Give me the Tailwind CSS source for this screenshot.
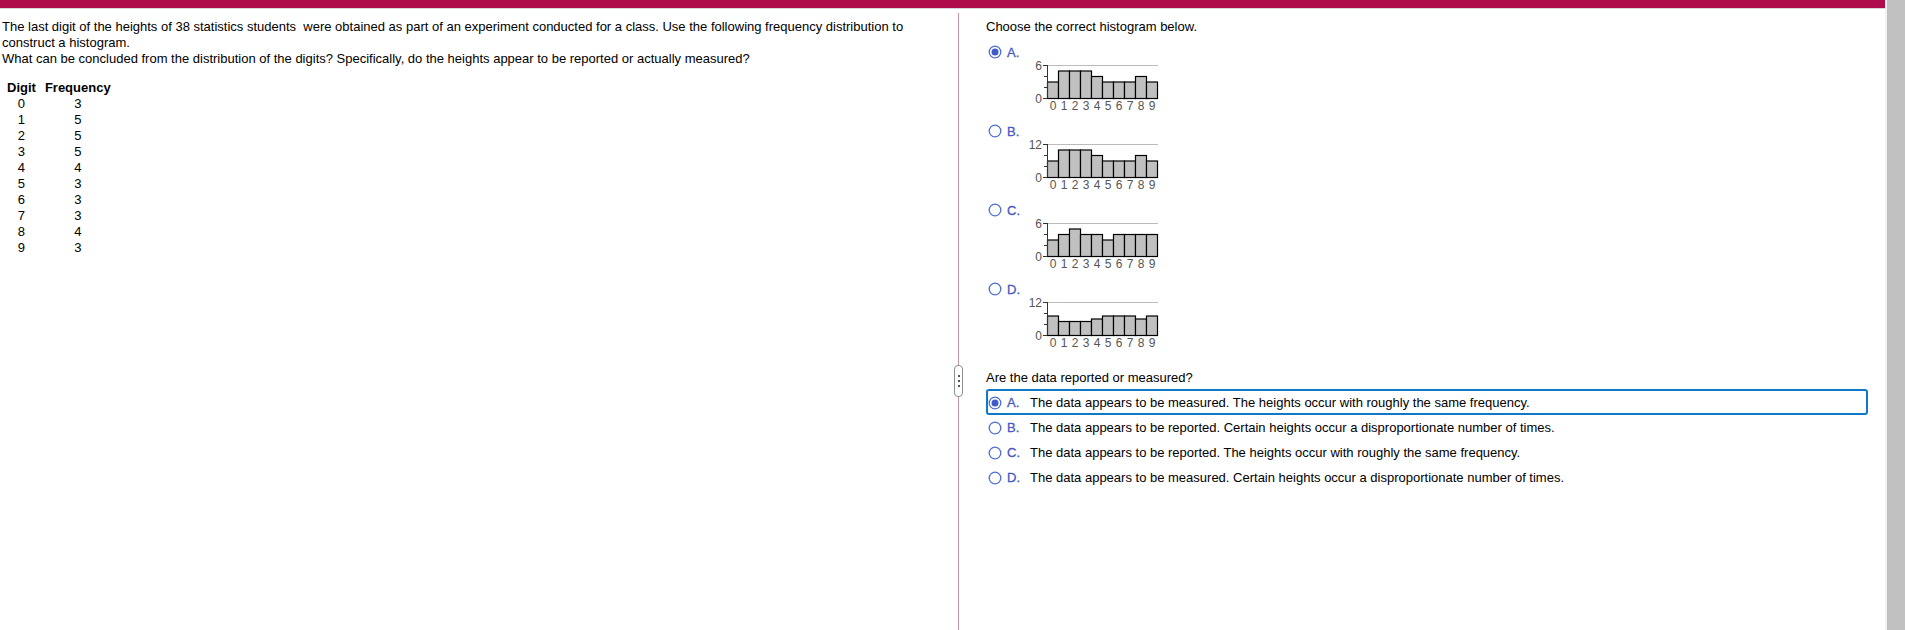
<!DOCTYPE html>
<html lang="en">
<head>
    <meta charset="UTF-8">
    <title>Statistics Question</title>
    <script src="https://cdn.jsdelivr.net/npm/@tailwindcss/browser@4"></script>
</head>
<body class="bg-white h-[630px] overflow-hidden flex font-['Liberation_Sans',Arial,sans-serif] text-[13px] leading-[16px] text-black">

<!-- Page -->
<div class="w-[1885px] flex flex-col">
    <div class="h-[8px] bg-[#af0c4c] shrink-0"></div>
    <div class="h-px bg-[#cfd6dc] shrink-0"></div>

    <div class="relative flex flex-1">
        <!-- Question -->
        <div class="w-[958px] shrink-0 pl-[2px] pt-[10px]">
            <p class="w-[930px]">The last digit of the heights of 38 statistics students&nbsp; were obtained as part of an experiment conducted for a class. Use the following frequency distribution to construct a histogram.</p>
            <p>What can be concluded from the distribution of the digits? Specifically, do the heights appear to be reported or actually measured?</p>

            <table class="mt-[13px] ml-[5px] border-collapse">
                <thead>
                    <tr class="font-bold h-[16px]"><th class="font-bold pr-[9px] text-center">Digit</th><th class="font-bold text-center">Frequency</th></tr>
                </thead>
                <tbody class="text-center">
                    <tr class="h-[16px]"><td class="pr-[9px]">0</td><td>3</td></tr>
                    <tr class="h-[16px]"><td class="pr-[9px]">1</td><td>5</td></tr>
                    <tr class="h-[16px]"><td class="pr-[9px]">2</td><td>5</td></tr>
                    <tr class="h-[16px]"><td class="pr-[9px]">3</td><td>5</td></tr>
                    <tr class="h-[16px]"><td class="pr-[9px]">4</td><td>4</td></tr>
                    <tr class="h-[16px]"><td class="pr-[9px]">5</td><td>3</td></tr>
                    <tr class="h-[16px]"><td class="pr-[9px]">6</td><td>3</td></tr>
                    <tr class="h-[16px]"><td class="pr-[9px]">7</td><td>3</td></tr>
                    <tr class="h-[16px]"><td class="pr-[9px]">8</td><td>4</td></tr>
                    <tr class="h-[16px]"><td class="pr-[9px]">9</td><td>3</td></tr>
                </tbody>
            </table>
        </div>

        <!-- Divider -->
        <div class="w-px mt-[4px] bg-[#c093a6] shrink-0"></div>

        <!-- Drag handle -->
        <div class="absolute left-[954px] top-[356px] w-[9px] h-[32px] rounded-[4px] border border-[#8a8f94] bg-white flex flex-col items-center justify-center gap-[3px]">
            <span class="w-[2px] h-[2px] bg-[#555]"></span>
            <span class="w-[2px] h-[2px] bg-[#555]"></span>
            <span class="w-[2px] h-[2px] bg-[#555]"></span>
        </div>

        <!-- Answers -->
        <div class="flex-1 pl-[27px] pt-[10px]">
            <p>Choose the correct histogram below.</p>

            <div class="mt-[10px]">
                <!-- A -->
                <div class="h-[79px] flex items-start">
                    <svg class="ml-[2px] shrink-0" width="14" height="14" viewBox="0 0 14 14"><circle cx="7" cy="7" r="5.8" fill="#fff" stroke="#4f6fd6" stroke-width="1.3"/><circle cx="7" cy="7" r="3.5" fill="#3f5bc9"/></svg>
                    <span class="ml-[5px] w-[18px] text-[#4658c2] [-webkit-text-stroke:0.3px_#4658c2]">A.</span>
                    <svg class="mt-[14px]" width="140" height="54" viewBox="0 0 140 54">
                        <line x1="22" y1="6.5" x2="133" y2="6.5" stroke="#bbb"/>
                        <g fill="#c0c0c0" stroke="#000" stroke-width="1.2">
                            <rect x="22.5" y="23" width="11" height="16.5"/><rect x="33.5" y="12" width="11" height="27.5"/><rect x="44.5" y="12" width="11" height="27.5"/><rect x="55.5" y="12" width="11" height="27.5"/><rect x="66.5" y="17.5" width="11" height="22"/>
                            <rect x="77.5" y="23" width="11" height="16.5"/><rect x="88.5" y="23" width="11" height="16.5"/><rect x="99.5" y="23" width="11" height="16.5"/><rect x="110.5" y="17.5" width="11" height="22"/><rect x="121.5" y="23" width="11" height="16.5"/>
                        </g>
                        <path d="M22.5 6V39.5M18 6.5H22M19 17.5H22M19 28.5H22M18 39.5H22" stroke="#333" fill="none"/>
                        <g font-size="12" fill="#555" text-anchor="end"><text x="17" y="11">6</text><text x="17" y="44">0</text></g>
                        <g font-size="12" fill="#555" text-anchor="middle"><text x="28" y="51">0</text><text x="39" y="51">1</text><text x="50" y="51">2</text><text x="61" y="51">3</text><text x="72" y="51">4</text><text x="83" y="51">5</text><text x="94" y="51">6</text><text x="105" y="51">7</text><text x="116" y="51">8</text><text x="127" y="51">9</text></g>
                    </svg>
                </div>
                <!-- B -->
                <div class="h-[79px] flex items-start">
                    <svg class="ml-[2px] shrink-0" width="14" height="14" viewBox="0 0 14 14"><circle cx="7" cy="7" r="5.8" fill="#fff" stroke="#4f6fd6" stroke-width="1.3"/></svg>
                    <span class="ml-[5px] w-[18px] text-[#4658c2] [-webkit-text-stroke:0.3px_#4658c2]">B.</span>
                    <svg class="mt-[14px]" width="140" height="54" viewBox="0 0 140 54">
                        <line x1="22" y1="6.5" x2="133" y2="6.5" stroke="#bbb"/>
                        <g fill="#c0c0c0" stroke="#000" stroke-width="1.2">
                            <rect x="22.5" y="23" width="11" height="16.5"/><rect x="33.5" y="12" width="11" height="27.5"/><rect x="44.5" y="12" width="11" height="27.5"/><rect x="55.5" y="12" width="11" height="27.5"/><rect x="66.5" y="17.5" width="11" height="22"/>
                            <rect x="77.5" y="23" width="11" height="16.5"/><rect x="88.5" y="23" width="11" height="16.5"/><rect x="99.5" y="23" width="11" height="16.5"/><rect x="110.5" y="17.5" width="11" height="22"/><rect x="121.5" y="23" width="11" height="16.5"/>
                        </g>
                        <path d="M22.5 6V39.5M18 6.5H22M19 17.5H22M19 28.5H22M18 39.5H22" stroke="#333" fill="none"/>
                        <g font-size="12" fill="#555" text-anchor="end"><text x="17" y="11">12</text><text x="17" y="44">0</text></g>
                        <g font-size="12" fill="#555" text-anchor="middle"><text x="28" y="51">0</text><text x="39" y="51">1</text><text x="50" y="51">2</text><text x="61" y="51">3</text><text x="72" y="51">4</text><text x="83" y="51">5</text><text x="94" y="51">6</text><text x="105" y="51">7</text><text x="116" y="51">8</text><text x="127" y="51">9</text></g>
                    </svg>
                </div>
                <!-- C -->
                <div class="h-[79px] flex items-start">
                    <svg class="ml-[2px] shrink-0" width="14" height="14" viewBox="0 0 14 14"><circle cx="7" cy="7" r="5.8" fill="#fff" stroke="#4f6fd6" stroke-width="1.3"/></svg>
                    <span class="ml-[5px] w-[18px] text-[#4658c2] [-webkit-text-stroke:0.3px_#4658c2]">C.</span>
                    <svg class="mt-[14px]" width="140" height="54" viewBox="0 0 140 54">
                        <line x1="22" y1="6.5" x2="133" y2="6.5" stroke="#bbb"/>
                        <g fill="#c0c0c0" stroke="#000" stroke-width="1.2">
                            <rect x="22.5" y="23" width="11" height="16.5"/><rect x="33.5" y="17.5" width="11" height="22"/><rect x="44.5" y="12" width="11" height="27.5"/><rect x="55.5" y="17.5" width="11" height="22"/><rect x="66.5" y="17.5" width="11" height="22"/>
                            <rect x="77.5" y="23" width="11" height="16.5"/><rect x="88.5" y="17.5" width="11" height="22"/><rect x="99.5" y="17.5" width="11" height="22"/><rect x="110.5" y="17.5" width="11" height="22"/><rect x="121.5" y="17.5" width="11" height="22"/>
                        </g>
                        <path d="M22.5 6V39.5M18 6.5H22M19 17.5H22M19 28.5H22M18 39.5H22" stroke="#333" fill="none"/>
                        <g font-size="12" fill="#555" text-anchor="end"><text x="17" y="11">6</text><text x="17" y="44">0</text></g>
                        <g font-size="12" fill="#555" text-anchor="middle"><text x="28" y="51">0</text><text x="39" y="51">1</text><text x="50" y="51">2</text><text x="61" y="51">3</text><text x="72" y="51">4</text><text x="83" y="51">5</text><text x="94" y="51">6</text><text x="105" y="51">7</text><text x="116" y="51">8</text><text x="127" y="51">9</text></g>
                    </svg>
                </div>
                <!-- D -->
                <div class="h-[79px] flex items-start">
                    <svg class="ml-[2px] shrink-0" width="14" height="14" viewBox="0 0 14 14"><circle cx="7" cy="7" r="5.8" fill="#fff" stroke="#4f6fd6" stroke-width="1.3"/></svg>
                    <span class="ml-[5px] w-[18px] text-[#4658c2] [-webkit-text-stroke:0.3px_#4658c2]">D.</span>
                    <svg class="mt-[14px]" width="140" height="54" viewBox="0 0 140 54">
                        <line x1="22" y1="6.5" x2="133" y2="6.5" stroke="#bbb"/>
                        <g fill="#c0c0c0" stroke="#000" stroke-width="1.2">
                            <rect x="22.5" y="20" width="11" height="19.5"/><rect x="33.5" y="25.5" width="11" height="14"/><rect x="44.5" y="25.5" width="11" height="14"/><rect x="55.5" y="25.5" width="11" height="14"/><rect x="66.5" y="23" width="11" height="16.5"/>
                            <rect x="77.5" y="20" width="11" height="19.5"/><rect x="88.5" y="20" width="11" height="19.5"/><rect x="99.5" y="20" width="11" height="19.5"/><rect x="110.5" y="23" width="11" height="16.5"/><rect x="121.5" y="20" width="11" height="19.5"/>
                        </g>
                        <path d="M22.5 6V39.5M18 6.5H22M19 17.5H22M19 28.5H22M18 39.5H22" stroke="#333" fill="none"/>
                        <g font-size="12" fill="#555" text-anchor="end"><text x="17" y="11">12</text><text x="17" y="44">0</text></g>
                        <g font-size="12" fill="#555" text-anchor="middle"><text x="28" y="51">0</text><text x="39" y="51">1</text><text x="50" y="51">2</text><text x="61" y="51">3</text><text x="72" y="51">4</text><text x="83" y="51">5</text><text x="94" y="51">6</text><text x="105" y="51">7</text><text x="116" y="51">8</text><text x="127" y="51">9</text></g>
                    </svg>
                </div>
            </div>

            <p class="mt-[9px]">Are the data reported or measured?</p>

            <div class="mt-[3px] w-[882px]">
                <div class="h-[26px] pt-px flex items-center border-2 border-[#1178c8] rounded-[3px]">
                    <svg class="shrink-0" width="14" height="14" viewBox="0 0 14 14"><circle cx="7" cy="7" r="5.8" fill="#fff" stroke="#4f6fd6" stroke-width="1.3"/><circle cx="7" cy="7" r="3.5" fill="#3f5bc9"/></svg>
                    <span class="ml-[5px] w-[23px] text-[#4658c2] [-webkit-text-stroke:0.3px_#4658c2]">A.</span>
                    <span>The data appears to be measured. The heights occur with roughly the same frequency.</span>
                </div>
                <div class="h-[25px] pt-px flex items-center border-x-2 border-transparent">
                    <svg class="shrink-0" width="14" height="14" viewBox="0 0 14 14"><circle cx="7" cy="7" r="5.8" fill="#fff" stroke="#4f6fd6" stroke-width="1.3"/></svg>
                    <span class="ml-[5px] w-[23px] text-[#4658c2] [-webkit-text-stroke:0.3px_#4658c2]">B.</span>
                    <span>The data appears to be reported. Certain heights occur a disproportionate number of times.</span>
                </div>
                <div class="h-[25px] pt-px flex items-center border-x-2 border-transparent">
                    <svg class="shrink-0" width="14" height="14" viewBox="0 0 14 14"><circle cx="7" cy="7" r="5.8" fill="#fff" stroke="#4f6fd6" stroke-width="1.3"/></svg>
                    <span class="ml-[5px] w-[23px] text-[#4658c2] [-webkit-text-stroke:0.3px_#4658c2]">C.</span>
                    <span>The data appears to be reported. The heights occur with roughly the same frequency.</span>
                </div>
                <div class="h-[25px] pt-px flex items-center border-x-2 border-transparent">
                    <svg class="shrink-0" width="14" height="14" viewBox="0 0 14 14"><circle cx="7" cy="7" r="5.8" fill="#fff" stroke="#4f6fd6" stroke-width="1.3"/></svg>
                    <span class="ml-[5px] w-[23px] text-[#4658c2] [-webkit-text-stroke:0.3px_#4658c2]">D.</span>
                    <span>The data appears to be measured. Certain heights occur a disproportionate number of times.</span>
                </div>
            </div>
        </div>
    </div>
</div>

<!-- Scrollbar -->
<div class="w-[20px] shrink-0 bg-[#f1f1f1] pl-[2px]">
    <div class="h-full bg-[#c1c1c1]"></div>
</div>

</body>
</html>
